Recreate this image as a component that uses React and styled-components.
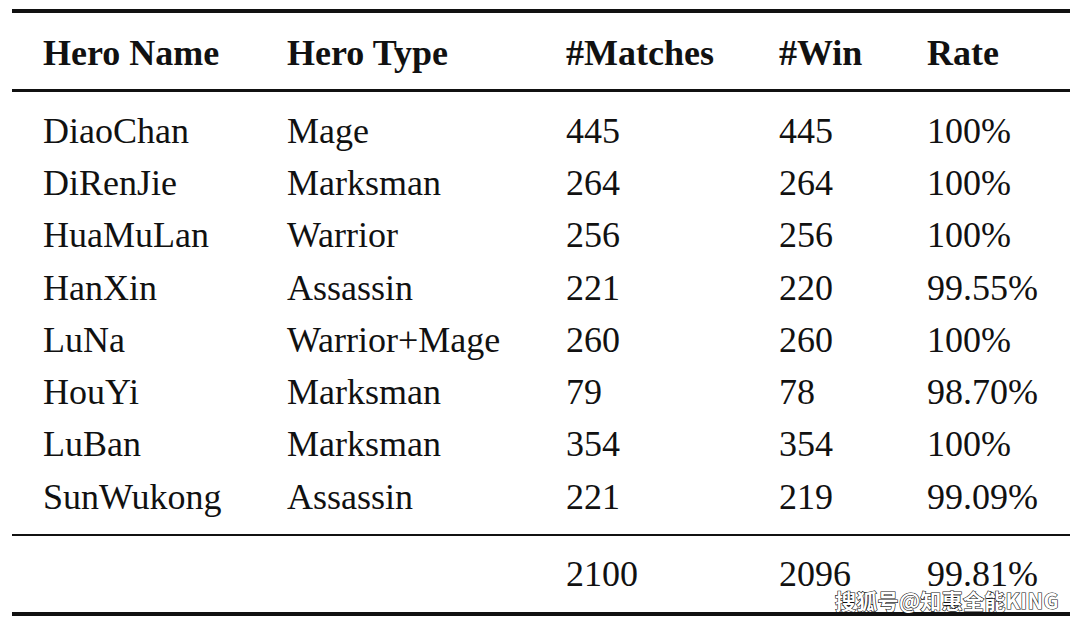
import React from "react";
import styled, { createGlobalStyle } from "styled-components";

const Global = createGlobalStyle`
  html, body { margin: 0; padding: 0; background: #ffffff; }
  body { width: 1080px; height: 625px; overflow: hidden; }
`;

const Page = styled.div`
  position: relative;
  width: 1080px;
  height: 625px;
  padding-top: 9px;
  box-sizing: border-box;
  font-family: "Liberation Serif", "Times New Roman", serif;
  color: #111;
`;

const Table = styled.div`
  margin-left: 12px;
  width: 1058px;
  border-top: 4px solid #111;
  border-bottom: 4px solid #111;
`;

const Section = styled.div`
  padding: ${(p) => p.$pad};
  border-bottom: ${(p) => (p.$rule ? `${p.$rule}px solid #111` : "none")};
`;

const Row = styled.div`
  display: grid;
  grid-template-columns: 244px 279px 213px 148px 1fr;
  padding-left: 31px;
  font-size: 36px;
  line-height: ${(p) => p.$lh}px;
  font-weight: ${(p) => (p.$head ? 700 : 400)};
  white-space: nowrap;
`;

const Cell = styled.div``;

const Watermark = styled.div`
  position: absolute;
  left: 835px;
  top: 587px;
  font-family: "Noto Sans CJK SC", "Noto Sans", sans-serif;
  font-size: 21px;
  line-height: 26px;
  letter-spacing: 0.3px;
  color: #ffffff;
  -webkit-text-stroke: 1.2px #111;
  paint-order: stroke fill;
  font-weight: 700;
`;

const header = ["Hero Name", "Hero Type", "#Matches", "#Win", "Rate"];
const rows = [
  ["DiaoChan", "Mage", "445", "445", "100%"],
  ["DiRenJie", "Marksman", "264", "264", "100%"],
  ["HuaMuLan", "Warrior", "256", "256", "100%"],
  ["HanXin", "Assassin", "221", "220", "99.55%"],
  ["LuNa", "Warrior+Mage", "260", "260", "100%"],
  ["HouYi", "Marksman", "79", "78", "98.70%"],
  ["LuBan", "Marksman", "354", "354", "100%"],
  ["SunWukong", "Assassin", "221", "219", "99.09%"],
];
const total = ["", "", "2100", "2096", "99.81%"];

export default function App() {
  return (
    <Page>
      <Global />
      <Table>
        <Section $pad="4px 0 0 0" $rule={3}>
          <Row $head $lh={72}>
            {header.map((h, i) => (
              <Cell key={i}>{h}</Cell>
            ))}
          </Row>
        </Section>
        <Section $pad="12.7px 0 11.3px 0" $rule={2}>
          {rows.map((r, ri) => (
            <Row key={ri} $lh={52.3}>
              {r.map((c, ci) => (
                <Cell key={ci}>{c}</Cell>
              ))}
            </Row>
          ))}
        </Section>
        <Section $pad="12px 0 11.7px 0">
          <Row $lh={52.3}>
            {total.map((c, ci) => (
              <Cell key={ci}>{c}</Cell>
            ))}
          </Row>
        </Section>
      </Table>
      <Watermark>搜狐号@知惠全能KING</Watermark>
    </Page>
  );
}
